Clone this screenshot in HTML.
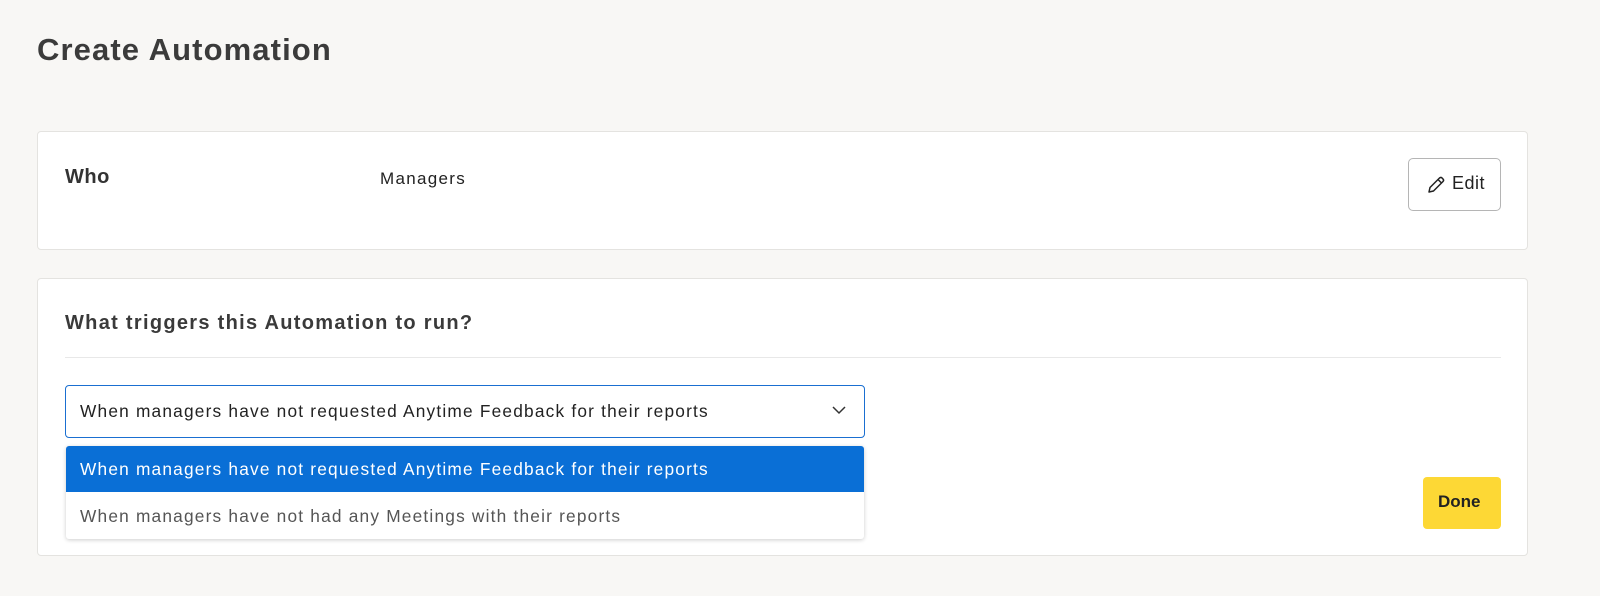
<!DOCTYPE html>
<html><head><style>
*{box-sizing:border-box;margin:0;padding:0}
body{width:1600px;height:596px;background:#f8f7f5;font-family:"Liberation Sans",sans-serif;color:#222;position:relative;overflow:hidden}
.abs{position:absolute}
h1{position:absolute;left:37px;top:32px;font-size:31px;font-weight:600;color:#3b3b3b;letter-spacing:1.1px}
.card{position:absolute;left:37px;width:1491px;background:#fff;border:1px solid #e4e3e0;border-radius:4px}
.t{position:absolute;white-space:nowrap}
.o{font-size:17.3px;letter-spacing:1.2px}
</style></head><body>
<h1>Create Automation</h1>
<div class="card" style="top:131px;height:119px">
  <div class="t" style="left:27px;top:34px;font-size:20px;font-weight:600;color:#333;letter-spacing:0.5px">Who</div>
  <div class="t" style="left:342px;top:37px;font-size:17px;color:#222;letter-spacing:1.3px">Managers</div>
  <div class="abs" style="left:1370px;top:26px;width:93px;height:53px;border:1px solid #b5b5b5;border-radius:5px">
    <svg class="abs" style="left:17px;top:16px" width="20" height="20" viewBox="0 0 20 20" fill="none" stroke="#222" stroke-width="1.5" stroke-linejoin="round"><path d="M3 17 L4 12.5 L13.5 3 Q15 1.8 16.3 3.2 L17 4 Q18.2 5.3 17 6.5 L7.5 16 Z M12 4.5 L15.5 8"/></svg>
    <div class="t" style="left:43px;top:14px;font-size:18px;color:#222;letter-spacing:0.5px">Edit</div>
  </div>
</div>
<div class="card" style="top:278px;height:278px">
  <div class="t" style="left:27px;top:33px;font-size:20px;font-weight:600;color:#3a3a3a;letter-spacing:1.3px">What triggers this Automation to run?</div>
  <div class="abs" style="left:27px;top:78px;width:1436px;height:1px;background:#e8e8e8"></div>
  <div class="abs" style="left:27px;top:106px;width:800px;height:53px;border:1.5px solid #1a6fd1;border-radius:4px">
    <div class="t o" style="left:14px;top:15px;color:#222">When managers have not requested Anytime Feedback for their reports</div>
    <svg class="abs" style="left:766px;top:19px" width="14" height="10" viewBox="0 0 14 10" fill="none" stroke="#333" stroke-width="1.5"><path d="M1 2 L7 8 L13 2"/></svg>
  </div>
  <div class="abs" style="left:28px;top:167px;width:798px;height:93px;background:#fff;box-shadow:0 1px 4px rgba(0,0,0,.2);border-radius:3px;overflow:hidden">
    <div class="abs" style="left:0;top:0;width:798px;height:46px;background:#0a6fd6"></div>
    <div class="t o" style="left:14px;top:13px;color:#fff">When managers have not requested Anytime Feedback for their reports</div>
    <div class="t o" style="left:14px;top:60px;color:#555">When managers have not had any Meetings with their reports</div>
  </div>
  <div class="abs" style="left:1385px;top:198px;width:78px;height:52px;background:#fdd835;border-radius:4px">
    <div class="t" style="left:15px;top:15px;font-size:17px;font-weight:600;color:#222">Done</div>
  </div>
</div>
</body></html>
